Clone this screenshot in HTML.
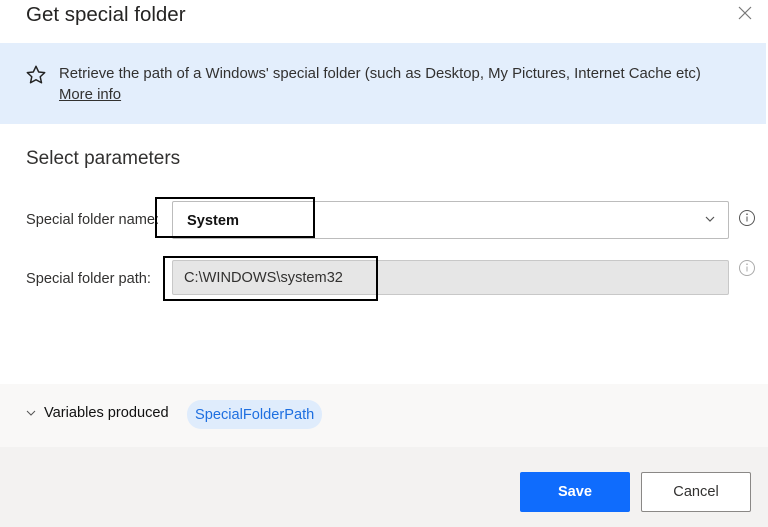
<!DOCTYPE html>
<html><head><style>
*{margin:0;padding:0;box-sizing:border-box}
body{width:768px;height:527px;position:relative;background:#fff;font-family:"Liberation Sans",sans-serif;overflow:hidden;color:#323130}
.a{position:absolute}
</style></head><body>
<div class="a" style="left:26px;top:3px;font-size:20.5px;color:#252423">Get special folder</div>
<svg class="a" style="left:737px;top:5px" width="16" height="16"><path d="M2 2L14 14M14 2L2 14" stroke="#777" stroke-width="1.2"/></svg>
<div class="a" style="left:0;top:43px;width:766px;height:81px;background:#e3eefc"></div>
<svg class="a" style="left:25px;top:64px" width="22" height="22" viewBox="0 0 24 24"><path d="M12 2.5l2.9 6.2 6.6.7-4.9 4.5 1.4 6.6L12 17.2l-6 3.3 1.4-6.6-4.9-4.5 6.6-.7z" fill="none" stroke="#222" stroke-width="1.6" stroke-linejoin="round"/></svg>
<div class="a" style="left:59px;top:66px;font-size:14.9px;color:#323130">Retrieve the path of a Windows' special folder (such as Desktop, My Pictures, Internet Cache etc)</div>
<div class="a" style="left:59px;top:87px;font-size:14.9px;color:#323130;text-decoration:underline">More info</div>
<div class="a" style="left:26px;top:148px;font-size:19px;color:#323130">Select parameters</div>
<div class="a" style="left:26px;top:212px;font-size:14.6px">Special folder name:</div>
<div class="a" style="left:172px;top:201px;width:557px;height:38px;border:1px solid #bcbcbc;border-radius:2px;background:#fff"></div>
<div class="a" style="left:187px;top:213px;font-size:14.6px;color:#111;font-weight:bold">System</div>
<svg class="a" style="left:704px;top:214px" width="12" height="10"><path d="M2 3l4 4 4-4" fill="none" stroke="#555" stroke-width="1.2"/></svg>
<svg class="a" style="left:738px;top:209px" width="18" height="18"><circle cx="9" cy="9" r="7.5" fill="none" stroke="#555" stroke-width="1"/><path d="M9 7.5v5" stroke="#555"/><circle cx="9" cy="5.2" r=".8" fill="#555"/></svg>
<div class="a" style="left:155px;top:197px;width:160px;height:41px;border:2px solid #000"></div>
<div class="a" style="left:26px;top:271px;font-size:14.6px">Special folder path:</div>
<div class="a" style="left:172px;top:260px;width:557px;height:35px;border:1px solid #c8c8c8;border-radius:2px;background:#e6e6e6"></div>
<div class="a" style="left:184px;top:270px;font-size:14.6px;color:#323130">C:\WINDOWS\system32</div>
<svg class="a" style="left:738px;top:259px" width="18" height="18"><circle cx="9" cy="9" r="7.5" fill="none" stroke="#aaa" stroke-width="1"/><path d="M9 7.5v5" stroke="#aaa"/><circle cx="9" cy="5.2" r=".8" fill="#aaa"/></svg>
<div class="a" style="left:163px;top:256px;width:215px;height:45px;border:2px solid #000"></div>
<div class="a" style="left:0;top:384px;width:768px;height:63px;background:#f9f8f7"></div>
<svg class="a" style="left:25px;top:408px" width="12" height="10"><path d="M2 3l4 4 4-4" fill="none" stroke="#555" stroke-width="1"/></svg>
<div class="a" style="left:44px;top:405px;font-size:14.6px;color:#111">Variables produced</div>
<div class="a" style="left:187px;top:400px;width:135px;height:29px;border-radius:14px;background:#dfecfc"></div>
<div class="a" style="left:195px;top:407px;font-size:14.6px;color:#1e6fe0">SpecialFolderPath</div>
<div class="a" style="left:0;top:447px;width:768px;height:80px;background:#f3f2f1"></div>
<div class="a" style="left:520px;top:472px;width:110px;height:40px;background:#0f6cfd;border-radius:2px;color:#fff;font-size:14.6px;font-weight:bold;text-align:center;line-height:40px">Save</div>
<div class="a" style="left:641px;top:472px;width:110px;height:40px;background:#fff;border:1px solid #8a8886;border-radius:2px;color:#323130;font-size:14.6px;text-align:center;line-height:38px">Cancel</div>
</body></html>
